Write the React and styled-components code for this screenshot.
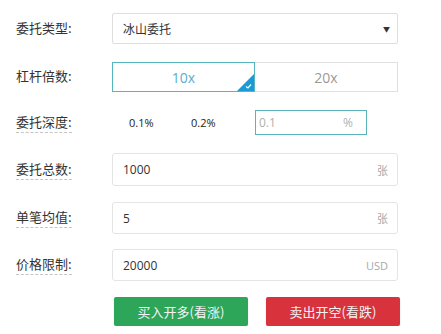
import React from "react";
import styled, { createGlobalStyle } from "styled-components";

const Global = createGlobalStyle`
  html, body { margin: 0; padding: 0; background: #fff; }
  body { font-family: "Open Sans", "Noto Sans CJK SC", sans-serif; }
`;

const Form = styled.div`
  padding: 13px 0 0 16px;
  display: flex;
  flex-direction: column;
`;

const Row = styled.div`
  display: grid;
  grid-template-columns: 96px 286px;
  align-items: center;
  height: ${(p) => p.$h}px;
  margin-bottom: ${(p) => p.$mb || 0}px;
`;

const Label = styled.span`
  justify-self: start;
  font-family: "Noto Sans CJK SC", sans-serif;
  font-size: 13px;
  color: #333;
  line-height: 18px;
  padding-bottom: 1px;
  border-bottom: ${(p) => (p.$dotted ? "1px dashed #c4c4c4" : "1px solid transparent")};
`;

const Select = styled.div`
  height: 100%;
  box-sizing: border-box;
  border: 1px solid #dedede;
  border-radius: 2px;
  display: flex;
  align-items: center;
  justify-content: space-between;
  padding: 0 7px 0 10px;
  font-family: "Noto Sans CJK SC", sans-serif;
  font-size: 12px;
  color: #333;
`;

const Arrow = styled.span`
  font-size: 7px;
  color: #333;
`;

const Segments = styled.div`
  height: 100%;
  display: grid;
  grid-template-columns: 143px 143px;
`;

const Segment = styled.div`
  position: relative;
  box-sizing: border-box;
  display: flex;
  align-items: center;
  justify-content: center;
  font-size: 14px;
  color: ${(p) => (p.$active ? "#5aaec9" : "#9a9a9a")};
  border: 1px solid ${(p) => (p.$active ? "#56b5bf" : "#e0e0e0")};
  ${(p) => (p.$active ? "" : "border-left: none;")}
  overflow: hidden;
`;

const Corner = styled.svg`
  position: absolute;
  right: 0;
  bottom: 0;
`;

const DepthWrap = styled.div`
  height: 100%;
  display: flex;
  align-items: center;
`;

const DepthOption = styled.span`
  width: ${(p) => p.$w}px;
  box-sizing: border-box;
  padding-left: 17px;
  font-size: 11px;
  color: #222;
`;

const DepthInput = styled.div`
  width: 112px;
  height: 100%;
  box-sizing: border-box;
  border: 1px solid #5bb3bb;
  display: flex;
  align-items: center;
  justify-content: space-between;
  padding: 0 13px 0 3px;
  font-size: 12px;
  color: #b0b0b0;
`;

const Input = styled.div`
  height: 100%;
  box-sizing: border-box;
  border: 1px solid #e4e4e4;
  border-radius: 3px;
  display: flex;
  align-items: center;
  justify-content: space-between;
  padding: 0 9px 0 10px;
  font-size: 12px;
  color: #333;
`;

const Unit = styled.span`
  color: #a8a8a8;
  font-size: 11px;
  font-family: "Open Sans", "Noto Sans CJK SC", sans-serif;
`;

const Buttons = styled.div`
  display: flex;
  gap: 18px;
  margin-left: 98px;
`;

const Button = styled.button`
  width: 134px;
  height: 29px;
  border: none;
  border-radius: 2px;
  background: ${(p) => p.$bg};
  color: #f3f3f3;
  font-family: "Noto Sans CJK SC", sans-serif;
  font-size: 13px;
  padding: 0;
  box-shadow: 0 1px 2px rgba(0,0,0,0.12);
`;

export default function App() {
  return (
    <>
      <Global />
      <Form>
        <Row $h={31} $mb={18}>
          <Label>委托类型:</Label>
          <Select>
            <span>冰山委托</span>
            <Arrow>▼</Arrow>
          </Select>
        </Row>
        <Row $h={30} $mb={18}>
          <Label>杠杆倍数:</Label>
          <Segments>
            <Segment $active>
              10x
              <Corner width="17" height="17" viewBox="0 0 17 17">
                <path d="M17 0 L17 17 L0 17 Z" fill="#1a9ad6" />
                <path d="M9 12.5 L11 14 L14 10.5" stroke="#fff" strokeWidth="1.2" fill="none" />
              </Corner>
            </Segment>
            <Segment>20x</Segment>
          </Segments>
        </Row>
        <Row $h={25} $mb={18}>
          <Label $dotted>委托深度:</Label>
          <DepthWrap>
            <DepthOption $w={62}>0.1%</DepthOption>
            <DepthOption $w={81}>0.2%</DepthOption>
            <DepthInput>
              <span>0.1</span>
              <span>%</span>
            </DepthInput>
          </DepthWrap>
        </Row>
        <Row $h={33} $mb={16}>
          <Label $dotted>委托总数:</Label>
          <Input>
            <span>1000</span>
            <Unit>张</Unit>
          </Input>
        </Row>
        <Row $h={32} $mb={15}>
          <Label $dotted>单笔均值:</Label>
          <Input>
            <span>5</span>
            <Unit>张</Unit>
          </Input>
        </Row>
        <Row $h={32} $mb={16}>
          <Label $dotted>价格限制:</Label>
          <Input>
            <span>20000</span>
            <Unit>USD</Unit>
          </Input>
        </Row>
        <Buttons>
          <Button $bg="#2ea65a">买入开多(看涨)</Button>
          <Button $bg="#d8323c">卖出开空(看跌)</Button>
        </Buttons>
      </Form>
    </>
  );
}
